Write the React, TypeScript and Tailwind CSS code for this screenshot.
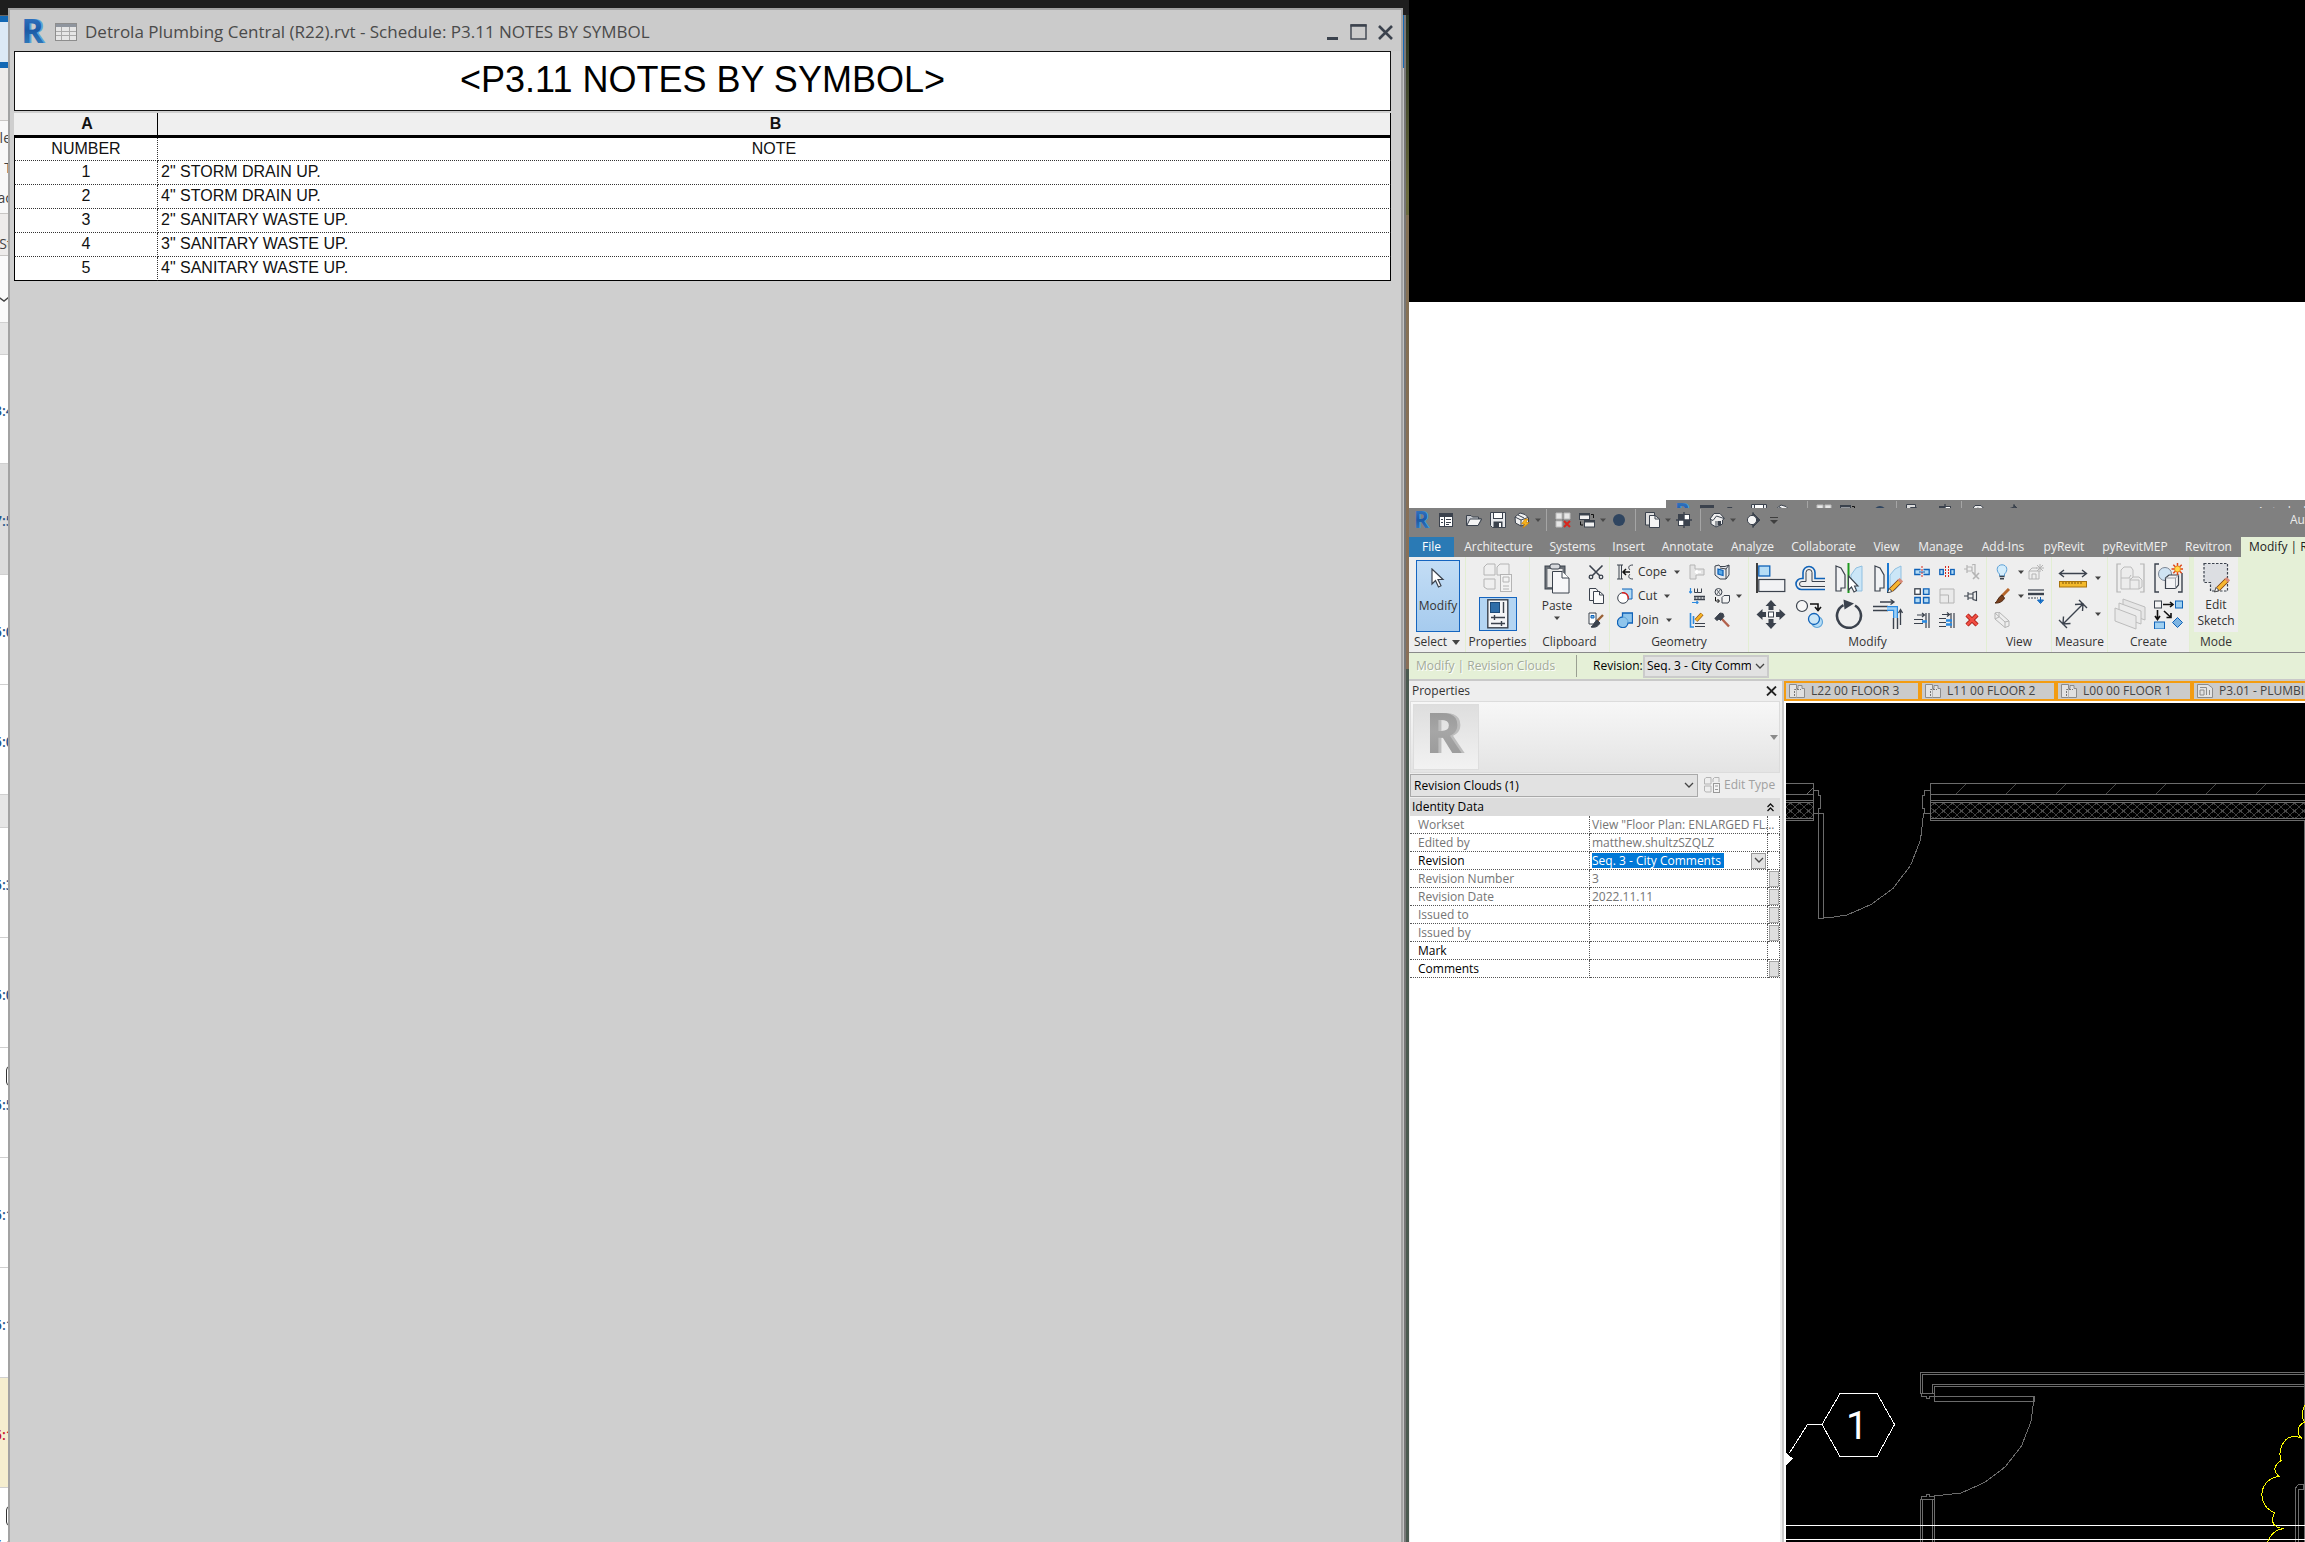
import React from 'react'
import clsx from 'clsx'

type Kids = { children?: React.ReactNode }

const INK = '#3b424d'
const BLUE = '#0f62b8'
const SKY = '#b5dcf5'
const PALE = '#e9ebef'
const OFF = '#b4b4b4'

function Svg({ w = 16, h = w, children }: Kids & { w?: number; h?: number }) {
  return (
    <svg
      width={w}
      height={h}
      viewBox={`0 0 ${w} ${h}`}
      fill="none"
      stroke={INK}
      aria-hidden="true"
      className="shrink-0"
    >
      {children}
    </svg>
  )
}

const Caret = ({ color = '#444' }: { color?: string }) => (
  <Svg w={6} h={4}>
    <path d="M0 0.5H6L3 4Z" fill={color} stroke="none" />
  </Svg>
)

const Chevron = () => (
  <Svg w={10} h={7}>
    <path d="M1 1L5 5L9 1" stroke="#444" strokeWidth="1.3" />
  </Svg>
)

function Logo({ w, h, gray }: { w: number; h: number; gray?: boolean }) {
  return (
    <svg width={w} height={h} viewBox="0 0 24 28" aria-hidden="true" className="overflow-visible">
      <defs>
        <linearGradient id={gray ? 'rg' : 'rb'} x1="0" y1="0" x2="0" y2="1">
          <stop offset="0" stopColor={gray ? '#8e8e8e' : '#3f83cf'} />
          <stop offset="0.5" stopColor={gray ? '#a6a6a6' : '#1b5aa6'} />
          <stop offset="1" stopColor={gray ? '#959595' : '#3c8fc4'} />
        </linearGradient>
      </defs>
      <g fontFamily="Open Sans, sans-serif" fontWeight="700" fontSize="37">
        <text x="0" y="27" fill={gray ? '#bdbdbd' : '#5aa3dc'}>
          R
        </text>
        <text x="-2" y="27" fill={gray ? 'url(#rg)' : 'url(#rb)'}>
          R
        </text>
      </g>
    </svg>
  )
}

/* ---------- schedule window ---------- */

const notes = [
  ['1', '2" STORM DRAIN UP.'],
  ['2', '4" STORM DRAIN UP.'],
  ['3', '2" SANITARY WASTE UP.'],
  ['4', '3" SANITARY WASTE UP.'],
  ['5', '4" SANITARY WASTE UP.']
]

function ScheduleWindow() {
  return (
    <section className="flex min-w-0 flex-1 flex-col border-t-2 border-r-2 border-l-2 border-[#a3a3a3] bg-[#cfcfcf]">
      <header className="flex h-[41px] items-center bg-[#cbcbcb] pt-[2px] pr-2 pl-[13px] text-[#4a4a4a]">
        <Logo w={22} h={27} />
        <span className="ml-[10px] flex">
          <Svg w={22} h={18}>
            <rect x="0.5" y="0.5" width="21" height="17" fill="#e6e6e6" stroke="#8d8d8d" />
            <rect x="1" y="1" width="20" height="3" fill="#8f959e" stroke="none" />
            <path d="M1 8.5H21M1 12.5H21M6.5 4V17M14.5 4V17" stroke="#a9a9a9" />
          </Svg>
        </span>
        <h1 className="ml-2 flex-1 truncate font-['Open_Sans',sans-serif] text-[17px]">
          Detrola Plumbing Central (R22).rvt - Schedule: P3.11 NOTES BY SYMBOL
        </h1>
        <div className="flex gap-[11px]">
          <button aria-label="Minimize">
            <Svg w={12} h={16}>
              <path d="M0 14.5H11" strokeWidth="3" />
            </Svg>
          </button>
          <button aria-label="Maximize">
            <Svg w={17} h={16}>
              <rect x="1" y="1" width="15" height="14" strokeWidth="1.4" />
              <path d="M0.5 1.5H16.5" strokeWidth="2.5" />
            </Svg>
          </button>
          <button aria-label="Close">
            <Svg w={15} h={16}>
              <path d="M1 2L14 15M14 2L1 15" strokeWidth="2.6" />
            </Svg>
          </button>
        </div>
      </header>

      <div className="mr-[10px] ml-1 font-['Liberation_Sans',Arial,sans-serif] text-[#111]">
        <h2 className="flex h-[60px] items-center justify-center border border-[#111] bg-white pb-[2px] text-[36px] text-black">
          &lt;P3.11 NOTES BY SYMBOL&gt;
        </h2>
        <table className="mt-[2px] w-full table-fixed border-separate border-spacing-0 bg-white text-[16px] leading-5">
          <colgroup>
            <col className="w-[144px]" />
            <col />
          </colgroup>
          <thead>
            <tr className="h-[25px] bg-[#efefef]">
              <th className="border-r border-b-3 border-black p-0 pl-[3px]">A</th>
              <th className="border-r border-b-3 border-black p-0 pl-[3px]">B</th>
            </tr>
          </thead>
          <tbody>
            <tr className="h-[23px]">
              <td className="border-r border-b border-l border-dotted border-[#333] border-l-black p-0 text-center [border-left-style:solid]">
                NUMBER
              </td>
              <td className="border-r border-b border-dotted border-[#333] border-r-black p-0 text-center [border-right-style:solid]">
                NOTE
              </td>
            </tr>
            {notes.map(([n, text], i) => (
              <tr key={n} className="h-6">
                <td
                  className={clsx(
                    'border-r border-b border-l border-dotted border-[#333] border-l-black p-0 pb-[2px] text-center [border-left-style:solid]',
                    i === notes.length - 1 && 'border-b-black [border-bottom-style:solid]'
                  )}
                >
                  {n}
                </td>
                <td
                  className={clsx(
                    'border-r border-b border-dotted border-[#333] border-r-black p-0 pb-[2px] pl-[3px] [border-right-style:solid]',
                    i === notes.length - 1 && 'border-b-black [border-bottom-style:solid]'
                  )}
                >
                  {text}
                </td>
              </tr>
            ))}
          </tbody>
        </table>
      </div>
    </section>
  )
}

/* ---------- sliver of the mail window behind ---------- */

const mailRows = [
  { t: '3:4', c: 'h-[109px] bg-white' },
  { t: '7:5', c: 'h-[111px] bg-[#dcdcdc]' },
  { t: '5:0', c: 'h-[110px] bg-white' },
  { t: '5:0', c: 'h-[110px] bg-white' },
  { t: '', c: 'h-[33px] bg-[#e6e6e6]' },
  { t: '5:3', c: 'h-[110px] bg-white' },
  { t: '5:0', c: 'h-[110px] bg-white' },
  { t: '5:5', c: 'h-[110px] bg-white', box: true },
  { t: '5:1', c: 'h-[110px] bg-white' },
  { t: '5:1', c: 'h-[110px] bg-white' },
  { t: '5:1', c: 'h-[110px] bg-[#f5eecf] text-[#c8102e]' },
  { t: '5:1', c: 'h-[110px] bg-white', box: true }
]

function MailSliver() {
  return (
    <aside className="flex w-2 shrink-0 flex-col overflow-hidden font-['Open_Sans',sans-serif] text-[14px] leading-5 text-[#444]">
      <div className="h-2 shrink-0 border-b border-[#666] bg-[#1e1e1e]" />
      <div className="h-[52px] shrink-0 border-y-[6px] border-[#1368b4] bg-[#dce9f5]" />
      <div className="h-[53px] shrink-0 border-b border-[#c8c6c4] bg-[#eeeceb]" />
      <div className="flex h-[92px] shrink-0 flex-col items-end justify-around overflow-hidden bg-[#f8f8f8] pt-[2px]">
        <span className="-mr-[3px]">le</span>
        <span className="-mr-1">T</span>
        <span className="-mr-1">ac</span>
      </div>
      <div className="flex h-[43px] shrink-0 items-end justify-end border-y border-[#c8c6c4] bg-[#eeeceb] pb-px">
        <span className="-mr-1">St</span>
      </div>
      <div className="flex h-[66px] shrink-0 items-center bg-[#fafafa] pt-5">
        <Svg w={8} h={8}>
          <path d="M-3 1L4 6L9 2" stroke="#444" strokeWidth="1.4" />
        </Svg>
      </div>
      <div className="h-[33px] shrink-0 border-y border-[#d0d0d0] bg-[#e6e6e6]" />
      {mailRows.map((r, i) => (
        <div
          key={i}
          className={clsx(
            'relative flex shrink-0 items-center overflow-hidden border-b border-[#d0d0d0] pt-1 font-semibold text-[#27548a]',
            r.c
          )}
        >
          {r.box && (
            <i className="absolute top-[18px] left-[6px] size-5 rounded-sm border border-[#333]" />
          )}
          <span className="-ml-[6px]">{r.t}</span>
        </div>
      ))}
    </aside>
  )
}

/* ---------- quick access bar ---------- */

const Cell = ({ label, children }: Kids & { label: string }) => (
  <button aria-label={label} className="flex w-6 items-center justify-center">
    {children}
  </button>
)
const Drop = () => (
  <span className="flex w-2 items-center justify-center">
    <Caret color="#4a4a4a" />
  </span>
)
const Sep = () => <span className="mx-1 h-[22px] w-px bg-[#a5a5a5]" />

function QuickAccess({ titleWidth }: { titleWidth: string }) {
  return (
    <div className="flex h-[29px] items-center overflow-hidden bg-[#808080] pb-[5px] pl-px">
      <Cell label="Revit">
        <Logo w={15} h={17} />
      </Cell>
      <Cell label="Home">
        <Svg>
          <rect x="1.5" y="1.5" width="13" height="13" fill="#fff" />
          <path d="M2 3.5H14" strokeWidth="3" />
          <path d="M6.5 4V14M3 7.5H5M3 10.5H5M8 7.5H13M8 10.5H13M8 12.5H11" />
        </Svg>
      </Cell>
      <span className="w-1" />
      <Cell label="Open">
        <Svg>
          <path d="M0.5 13.5V3.5H5L6.5 5H12.5V7H15.5L12 13.5Z" fill="#c9ccd1" />
          <path d="M0.8 13.5L4 7H15.6L12 13.5Z" fill="#f4f4f4" />
        </Svg>
      </Cell>
      <Cell label="Save">
        <Svg>
          <path d="M0.5 0.5H15.5V15.5H2.5L0.5 13.5Z" fill="#e7e9ec" />
          <rect x="3.5" y="0.5" width="9" height="6" fill="#fff" />
          <rect x="4" y="10" width="8" height="5.5" fill={INK} />
          <rect x="9" y="11" width="2" height="4" fill="#fff" stroke="none" />
        </Svg>
      </Cell>
      <Cell label="Synchronize">
        <Svg>
          <path d="M1 5L6 1L11 2.5L14.5 6V11L7 14L1.5 11Z" fill="#f1f1f1" />
          <path d="M1 5L7 8L14 5.5M7 8V14M4 3L10 6" />
          <path
            d="M11 7L7.5 12H10.5L9 16L15.5 10.5H12L14 7Z"
            fill="#f7b41c"
            stroke="#c77a00"
            strokeWidth="0.6"
          />
        </Svg>
      </Cell>
      <Drop />
      <Sep />
      <Cell label="Close inactive views">
        <Svg>
          <path d="M1 1H7V7H1ZM9 1H15V7H9ZM1 9H7V15H1Z" fill="#e7e7e7" stroke="#bbb" />
          <path d="M9 9L15 15M15 9L9 15" stroke="#d9261c" strokeWidth="2" />
        </Svg>
      </Cell>
      <Cell label="Switch windows">
        <Svg>
          <rect x="0.5" y="1.5" width="10" height="6" fill="#f1f1f1" />
          <rect x="5.5" y="8.5" width="10" height="6.5" fill="#f1f1f1" />
          <path d="M0.5 2.5H10.5M5.5 9.5H15.5" strokeWidth="2" />
          <path d="M12 2.5H14.5V6M1.5 9.5V13H4" stroke="#111" />
        </Svg>
      </Cell>
      <Drop />
      <Cell label="Record">
        <span className="size-3 rounded-full bg-[#2f4560]" />
      </Cell>
      <Sep />
      <Cell label="Paste">
        <Svg>
          <path d="M1.5 0.5H10.5V13H1.5Z" fill="#ddd" />
          <path d="M5.5 3.5H11L15.5 7V15.5H5.5Z" fill="#f4f4f4" />
          <path d="M11 3.5V7H15.5" />
        </Svg>
      </Cell>
      <Drop />
      <Cell label="Spot">
        <Svg>
          <rect x="2.5" y="2.5" width="11" height="11" fill="#fff" />
          <path d="M8 0V16M0 8H16" strokeWidth="1.4" />
          <path d="M3 3H8V8H3ZM8 8H13V13H8Z" fill={INK} stroke="none" />
        </Svg>
      </Cell>
      <Sep />
      <Cell label="Default 3D view">
        <Svg>
          <path d="M1 7L5 1.5H11L15.5 6.5L13.5 8V12L7 15L2 12V8Z" fill="#eee" />
          <path d="M1 7L4 8.5L7.5 4L15 6.5M7 9V14.5" />
          <rect x="9" y="9.5" width="2.5" height="3.5" fill={INK} />
        </Svg>
      </Cell>
      <Drop />
      <span className="w-1" />
      <Cell label="Section">
        <Svg>
          <path d="M8 1L15 8L8 15Z" fill={INK} />
          <circle cx="7" cy="8" r="4.6" fill="#f4f4f4" />
          <path d="M8 0V3M8 13V16" />
        </Svg>
      </Cell>
      <button aria-label="Customize" className="ml-1 flex w-[10px] flex-col items-center gap-[2px]">
        <span className="h-px w-2 bg-[#3f3f3f]" />
        <Svg w={8} h={4}>
          <path d="M0 0H8L4 4Z" fill="#3f3f3f" stroke="none" />
        </Svg>
      </button>
      <span className="flex-1" />
      <span
        className={clsx(
          'shrink-0 overflow-hidden text-[12px] leading-4 whitespace-nowrap text-[#ececec]',
          titleWidth
        )}
      >
        Autodesk
      </span>
    </div>
  )
}

const tabs = [
  { name: 'Architecture', w: 'w-[85px]' },
  { name: 'Systems', w: 'w-[63px]' },
  { name: 'Insert', w: 'w-[49px]' },
  { name: 'Annotate', w: 'w-[69px]' },
  { name: 'Analyze', w: 'w-[61px]' },
  { name: 'Collaborate', w: 'w-[81px]' },
  { name: 'View', w: 'w-[45px]' },
  { name: 'Manage', w: 'w-[63px]' },
  { name: 'Add-Ins', w: 'w-[62px]' },
  { name: 'pyRevit', w: 'w-[60px]' },
  { name: 'pyRevitMEP', w: 'w-[82px]' },
  { name: 'Revitron', w: 'w-[65px]' }
]

function RibbonTabs() {
  return (
    <nav className="flex h-5 overflow-hidden bg-[#808080] text-[12px] leading-5 whitespace-nowrap text-[#f0f0f0]">
      <button className="mr-[2px] w-[45px] shrink-0 bg-[#2a7ab5] text-white">File</button>
      {tabs.map((t) => (
        <button key={t.name} className={clsx('shrink-0', t.w)}>
          {t.name}
        </button>
      ))}
      <button className="flex-1 overflow-hidden bg-[#e5f0d7] pl-2 text-left text-[#222]">
        Modify | Revision Clouds
      </button>
    </nav>
  )
}

/* ---------- ribbon icons ---------- */

const geometryIcons = [
  <Svg>
    <path d="M0 1H6M0 15H6M2 1V15M4.5 1V15M16 1C11 1 11 4 13 6M16 15C11 15 11 12 13 10" />
    <path d="M13 8H6M9 5L6 8L9 11" stroke="#111" strokeWidth="1.5" />
  </Svg>,
  <Svg>
    <path d="M5 1H15V11H11" fill={SKY} stroke={BLUE} />
    <circle cx="6" cy="10" r="5.3" fill="#fff" stroke={INK} />
    <path d="M5 4.8A5.3 5.3 0 0 1 11.2 11" stroke="#e02020" strokeWidth="1.4" />
  </Svg>,
  <Svg>
    <path d="M5.5 1H15.5V11H11A5.3 5.3 0 1 1 5.5 5Z" fill="#8fc5ec" stroke={BLUE} strokeWidth="1.3" />
    <path d="M5.5 5A5.3 5.3 0 0 1 11 11" stroke="#5fa4d8" />
  </Svg>
]

const Cut = () => (
  <Svg>
    <path d="M1.5 1.5L12 12M14.5 1.5L4 12" strokeWidth="1.6" />
    <circle cx="3" cy="13" r="1.8" strokeWidth="1.3" />
    <circle cx="13" cy="13" r="1.8" strokeWidth="1.3" />
  </Svg>
)
const Copy = () => (
  <Svg>
    <path d="M1.5 0.5H8L10 3V12.5H1.5Z" fill="#f6f6f6" />
    <path d="M5.5 3.5H11.5L15.5 7V15.5H5.5Z" fill="#fafafa" />
    <path d="M11.5 3.5V7H15.5" />
  </Svg>
)
const Match = () => (
  <Svg>
    <path d="M1 1H8V12H1Z" fill="#fff" />
    <path d="M3 3.5H6V6H3Z" fill="#79b6e6" stroke={BLUE} />
    <path d="M15 3L9 9" stroke="#9a6136" strokeWidth="2.4" />
    <path d="M9 8L12 11C10 15 6 16 3 15C6 13 6 10 9 8Z" fill={INK} />
  </Svg>
)

const geometrySide = [
  <Svg>
    <path d="M1 1H6V5H15V11H7V15H1Z" fill="#e4e4e4" stroke={OFF} />
    <path d="M12 8H6.5M8.5 6L6.5 8L8.5 10" stroke="#fff" strokeWidth="1.5" />
  </Svg>,
  <Svg>
    <path d="M1 2L5 1L6 2.5H11L15 1V11L12 15H6L1 11Z" fill={PALE} />
    <path d="M12 15V5L15 1M12 5L6 4" />
    <path d="M4 5L9 6.5V11.5L4 10Z" fill="#5aa9e6" stroke={BLUE} strokeWidth="1.3" />
  </Svg>,
  <Svg>
    <path d="M5.5 0.5V4.5H8.5V0.5M8.5 4.5H12.5V0.5" />
    <path d="M5 8.5H16M5 11.5H16" strokeWidth="1.3" />
    <path d="M5 10H16" strokeDasharray="2 1" />
    <path d="M1.5 0V5M0 3.5L1.5 5L3 3.5M3 14.5H9M7.5 13L9 14.5L7.5 16" stroke="#2b8ae0" strokeWidth="1.2" />
  </Svg>,
  <Svg>
    <circle cx="4.5" cy="4" r="3.5" />
    <path d="M2.5 1.5L6.5 6.5M6.5 1.5L2.5 6.5" strokeWidth="0.8" />
    <path d="M8 9.5L10 7.5H15.5V13L14 15H8Z" fill="#f3f3f3" />
    <path d="M1.5 9V13H5M3.5 11L5.5 13L3.5 15" stroke="#111" />
  </Svg>,
  <Svg>
    <path d="M1.5 1V15H5M4.5 4V12" stroke="#2b8ae0" strokeWidth="1.6" />
    <path d="M13 2L7 8.5" stroke="#7a3b0c" strokeWidth="4" />
    <path d="M13 2L7 8.5" stroke="#f5b324" strokeWidth="2.6" />
    <path d="M6 11.5H16M6 14.5H16" strokeWidth="1.2" />
  </Svg>,
  <Svg>
    <path d="M7 6L15 14.5" stroke="#b2604b" strokeWidth="2.4" />
    <path d="M0.8 6.5L6 1L9 1.5L10 4.5L6.5 8.5L5 7L3 8.5Z" fill={INK} />
  </Svg>
]

const modifyBig = [
  <Svg w={30}>
    <path d="M1 0V30" stroke="#111" strokeWidth="1.6" />
    <rect x="2.8" y="3" width="11" height="10" fill={SKY} stroke={BLUE} strokeWidth="1.3" />
    <rect x="2.8" y="16.5" width="26" height="12" fill="#f1f2f4" strokeWidth="1.2" />
  </Svg>,
  <Svg w={30}>
    <path
      d="M30 26.5H6.5A5.5 5.5 0 0 1 6.5 15.5H8V9.5A6 6 0 0 1 20 9.5V15.5H30"
      stroke={BLUE}
      strokeWidth="1.6"
    />
    <path d="M30 23.5H7A2.5 2.5 0 0 1 7 18.5H11V9.5A3 3 0 0 1 17 9.5V18.5H30" strokeWidth="1" />
  </Svg>,
  <Svg w={30}>
    <path d="M2 3L7 5L11 12V25H7V28H2Z" fill="#f1f2f4" strokeWidth="1.2" />
    <path d="M28 3L22 5L17 12V25H22V28H28Z" fill="#cbe6f7" stroke="#8fbfe0" />
    <path d="M14.5 0V30" stroke="#1f9a1f" strokeWidth="2" />
    <path d="M14.5 13V27L17.5 24L20 29L22.5 27.5L20.5 23H24Z" fill="#fff" strokeWidth="1.1" />
  </Svg>,
  <Svg w={30}>
    <path d="M2 3L7 5L11 12V25H7V28H2Z" fill="#f1f2f4" strokeWidth="1.2" />
    <path d="M28 3L22 6L17 12V27H22L28 20Z" fill="#cbe6f7" stroke="#8fbfe0" />
    <path d="M15 0V30" stroke="#1b78d0" strokeWidth="2" />
    <path d="M27 18L18 27" stroke="#7a3b0c" strokeWidth="5.2" />
    <path d="M26.5 18.5L18 27" stroke="#f7b731" strokeWidth="3.6" />
    <path d="M25.6 16L29 19.4" stroke="#d98b7a" strokeWidth="3" />
    <path d="M14.5 30L16 25.5L19 28.5Z" fill="#fff" stroke="#222" strokeWidth="0.8" />
  </Svg>,
  <Svg w={30}>
    <path
      d="M15 1L20.5 7H17.5V11H12.5V7H9.5ZM15 30L20.5 24H17.5V20H12.5V24H9.5ZM0.5 15.5L6.5 10V13H10V18H6.5V21ZM29.5 15.5L23.5 10V13H20V18H23.5V21Z"
      fill={INK}
      stroke="none"
    />
    <rect x="12.5" y="13" width="5" height="5" fill="#fff" />
  </Svg>,
  <Svg w={30}>
    <circle cx="7" cy="7" r="5.5" fill="#f6f6f6" strokeWidth="1.2" />
    <path d="M15 5H23V10M20 8L23 11.5L26 8" stroke="#111" strokeWidth="1.6" />
    <circle cx="22" cy="23" r="5.5" fill={SKY} stroke="#5fa4d8" strokeWidth="1.2" />
    <circle cx="19" cy="20" r="5.5" fill="#cbe6f7" stroke={BLUE} strokeWidth="1.3" />
  </Svg>,
  <Svg w={30}>
    <path d="M21 6.5A12 12 0 1 1 9.5 6.2" strokeWidth="2.6" />
    <path d="M9.5 0.5L20 4.5L10.5 10.5Z" fill={INK} stroke="none" />
  </Svg>,
  <Svg w={30}>
    <path d="M0 7.5H15M0 11.5H15M20.5 19V30M24.5 19V30" strokeWidth="1.4" />
    <path d="M14 9.5H22.5V19" stroke="#2b8ae0" strokeWidth="5" />
    <path d="M14 9.5H22.5V19" stroke="#9ed0f5" strokeWidth="2.6" />
    <path d="M7 3H21M17.5 0.5L21 3L17.5 5.5M27.5 26V11M25.5 14L27.5 10.5L29.5 14" strokeWidth="1.3" />
  </Svg>
]

const modifySmall = [
  <Svg>
    <path d="M8 2V14" stroke="#d9261c" strokeDasharray="2 1" />
    <path d="M6.5 5.5H0.8V10.5H6.5M9.5 5.5H15.2V10.5H9.5" fill={SKY} stroke={BLUE} strokeWidth="1.3" />
    <path d="M5 8H11" stroke={BLUE} />
  </Svg>,
  <Svg>
    <path d="M6.5 2V14M9.5 2V14" stroke="#d9261c" strokeDasharray="2 1" />
    <rect x="0.8" y="5.5" width="3.5" height="5" fill={SKY} stroke={BLUE} strokeWidth="1.3" />
    <rect x="11.7" y="5.5" width="3.5" height="5" fill={SKY} stroke={BLUE} strokeWidth="1.3" />
  </Svg>,
  <Svg>
    <path d="M0 5H3M3 1V9M3 3H8V7H3M8 1L11 0V10L8 8" stroke={OFF} strokeWidth="1.2" />
    <path d="M9 9L15 15M15 9L9 15" stroke={OFF} strokeWidth="1.6" />
  </Svg>,
  <Svg>
    <rect x="0.8" y="0.8" width="5.5" height="5.5" fill="#fff" strokeWidth="1.3" />
    <path
      d="M9.5 0.8H15V6.3H9.5ZM0.8 9.5H6.3V15H0.8ZM9.5 9.5H15V15H9.5Z"
      fill={SKY}
      stroke={BLUE}
      strokeWidth="1.3"
    />
  </Svg>,
  <Svg>
    <path d="M1 1H15V15H1ZM1 7H9.5V15" fill="#eaeaea" stroke={OFF} />
  </Svg>,
  <Svg>
    <path d="M0 8H4M4 4V12M4 6H9V10H4M9 4.5L12.5 3.5V12.5L9 11.5Z" strokeWidth="1.1" />
  </Svg>,
  <Svg>
    <path d="M0 7.5H9M0 11.5H9M12 1V16M15 1V16M3 3H10M8 1L10.5 3L8 5" strokeWidth="1.2" />
    <path d="M8 9.5H13" stroke="#2b8ae0" strokeWidth="2.6" />
  </Svg>,
  <Svg>
    <path
      d="M0 6.5H7M0 10.5H7M0 14.5H7M12 1V16M15 1V16M3 2.5H10M8 0.5L10.5 2.5L8 4.5"
      strokeWidth="1.2"
    />
    <path d="M7 8.5H13M7 12.5H13" stroke="#2b8ae0" strokeWidth="2.6" />
  </Svg>,
  <Svg>
    <path d="M3 3L13 13M13 3L3 13" stroke="#a51d14" strokeWidth="4.4" />
    <path d="M3 3L13 13M13 3L3 13" stroke="#f04d43" strokeWidth="2.6" />
  </Svg>
]

const createIcons = [
  <Svg w={30}>
    <path d="M6 1H2V29H6M25 1H29V29H25" stroke={OFF} strokeWidth="1.2" />
    <path d="M6 7L9 4H16L18 7V14H24L27 17V24L24 26H6Z" fill="#ececec" stroke="#bcbcbc" />
    <path d="M6 15H14L16 12M15 15V26M18 14L15 17H24V26" stroke="#bcbcbc" />
  </Svg>,
  <Svg w={30}>
    <path d="M6 1H2V29H6M25 29H29V10" strokeWidth="1.4" />
    <circle cx="12" cy="11" r="6.5" fill="#cfe3f3" stroke="#7a8594" />
    <path d="M12.5 15L16 12H25.5V22L22.5 25.5H12.5Z" fill="#f3f3f5" strokeWidth="1.2" />
    <path d="M12.5 15H22.5V25.5M22.5 15L25.5 12" stroke="#9a9fa8" />
    <path
      d="M24.5 0V12M18.5 6H30.5M20.3 1.8L28.7 10.2M28.7 1.8L20.3 10.2"
      stroke="#e0471b"
      strokeWidth="1.5"
    />
    <circle cx="24.5" cy="6" r="3" fill="#ffd84a" stroke="#e88a1c" />
  </Svg>,
  <Svg w={32} h={32}>
    <path d="M9 1L31 9V22L9 14Z" fill="#e6e6e6" stroke="#bcbcbc" />
    <path d="M5 5L27 13V26L5 18Z" fill="#ececec" stroke="#bcbcbc" />
    <path d="M1 10L22 18V31L1 23Z" fill="#e9e9e9" stroke="#bcbcbc" />
  </Svg>,
  <Svg w={30}>
    <rect x="1.5" y="2" width="7" height="7" fill="#f4f4f4" />
    <rect x="22.5" y="2" width="7" height="7" fill="#9fd0f2" stroke={BLUE} />
    <path
      d="M10 5.5H20M17 3L20 5.5L17 8M4.5 11V20M2 17L4.5 20.5L7 17M11 12L18 18.5M18 14V18.5H13.5"
      stroke="#111"
      strokeWidth="1.6"
    />
    <rect x="1.5" y="23" width="10" height="7" fill="#9fd0f2" stroke={BLUE} />
    <path d="M24.5 18.5L29.5 23.5L24.5 28.5L19.5 23.5Z" fill="#7db4e2" stroke={BLUE} />
  </Svg>
]

/* ---------- ribbon ---------- */

type PanelProps = Kids & { title: React.ReactNode; className: string }

function Panel({ title, className, children }: PanelProps) {
  return (
    <section
      className={clsx(
        'flex shrink-0 flex-col border-r border-[#e2eed3] bg-[#eeeeee]',
        className
      )}
    >
      <div className="flex h-[75px] pt-[3px]">{children}</div>
      <h3 className="flex h-5 items-center justify-center gap-[5px] whitespace-nowrap">{title}</h3>
    </section>
  )
}

type GridProps = { icons: React.ReactNode[]; className?: string; cell: string }

function IconGrid({ icons, className, cell }: GridProps) {
  return (
    <div className={clsx('grid content-start', className)}>
      {icons.map((icon, i) => (
        <button key={i} className={clsx('flex items-center justify-center', cell)}>
          {icon}
        </button>
      ))}
    </div>
  )
}

function Ribbon() {
  return (
    <div className="flex h-24 overflow-hidden border-b border-[#8a8a8a] bg-[#e5f0d7] text-[12px] leading-4 text-[#333]">
      <Panel
        title={
          <>
            Select
            <Svg w={8} h={5}>
              <path d="M0 0H8L4 5Z" fill="#444" stroke="none" />
            </Svg>
          </>
        }
        className="w-[57px]"
      >
        <button className="ml-[7px] flex h-[72px] w-11 flex-col items-center border border-[#1565c0] bg-linear-to-b from-[#c3ddf5] to-[#a6cbee] pt-[7px]">
          <Svg w={14} h={20}>
            <path d="M1 1V16L4.5 12.5L7.5 19L10 17.8L7 11.5H12Z" fill="#fff" strokeWidth="1.2" />
          </Svg>
          <span className="mt-[10px]">Modify</span>
        </button>
      </Panel>

      <Panel title="Properties" className="w-16">
        <div className="flex w-full flex-col items-center">
          <button aria-label="Type properties" className="mt-[3px]">
            <Svg w={30}>
              <path
                d="M1 4L4 1H12V12H1ZM14 4L17 1H26V12H14ZM1 16H12V26H4L1 24Z"
                fill="#efefef"
                stroke={OFF}
              />
              <rect x="17.5" y="11.5" width="11" height="17" fill="#f3f3f3" stroke={OFF} />
              <path d="M20 14H26V19H20ZM20 23H26M20 26H26" stroke={OFF} />
            </Svg>
          </button>
          <button
            aria-label="Properties"
            className="mt-1 flex h-[34px] w-[38px] items-center justify-center border border-[#1565c0] bg-[#b4d5f2]"
          >
            <Svg w={22} h={30}>
              <rect x="0.8" y="0.8" width="20" height="28" fill="#f4f5f7" strokeWidth="1.4" />
              <rect x="3.5" y="3.5" width="9" height="10" fill="#2f6da8" stroke="#1c4a7a" />
              <path d="M16.5 3V14M4 18.5H18M7.5 16V21M4 24.5H18M14.5 22V27" strokeWidth="1.4" />
            </Svg>
          </button>
        </div>
      </Panel>

      <Panel title="Clipboard" className="w-20">
        <button className="flex w-[54px] flex-col items-center pt-[3px]">
          <Svg w={26} h={31}>
            <rect x="1" y="3" width="20" height="23" fill="#6c7178" />
            <rect x="3.5" y="6" width="15" height="18" fill="#e9e9e9" stroke="none" />
            <rect x="6" y="1" width="10" height="5" rx="2" fill="#d8dade" />
            <path d="M8.5 8.5H18L25 15V30H8.5Z" fill="#f7f7f9" />
            <path d="M18 8.5V15H25" fill="#fff" />
          </Svg>
          <span className="mt-1">Paste</span>
          <span className="mt-[2px]">
            <Caret />
          </span>
        </button>
        <IconGrid icons={[<Cut />, <Copy />, <Match />]} cell="h-6 w-6" />
      </Panel>

      <Panel title="Geometry" className="w-[139px]">
        <div className="w-[74px] pl-[7px]">
          {['Cope', 'Cut', 'Join'].map((name, i) => (
            <button key={name} className="flex h-6 items-center gap-[5px]">
              {geometryIcons[i]}
              {name}
              <span className="ml-[2px]">
                <Caret />
              </span>
            </button>
          ))}
        </div>
        <IconGrid icons={geometrySide} className="grid-cols-2" cell="h-6 w-[25px]" />
        <span className="flex h-[72px] items-center pl-[2px]">
          <Caret />
        </span>
      </Panel>

      <Panel title="Modify" className="w-[238px]">
        <IconGrid icons={modifyBig} className="grid-cols-4 pl-[2px]" cell="h-9 w-[39px]" />
        <IconGrid icons={modifySmall} className="grid-cols-3 pl-[2px]" cell="h-6 w-[25px]" />
      </Panel>

      <Panel title="View" className="w-[65px]">
        <div className="flex flex-col">
          <button aria-label="Hide" className="flex h-6 w-9 items-center gap-2 pl-[7px]">
            <Svg>
              <path
                d="M5.5 10C1.5 6.5 3 0.8 8 0.8S14.5 6.5 10.5 10V12H5.5Z"
                fill="#d3ecfb"
                stroke="#5b9fd6"
              />
              <path d="M5.5 12.5H10.5M6 14.8H10" strokeWidth="1.5" />
            </Svg>
            <Caret />
          </button>
          <button aria-label="Override" className="flex h-6 w-9 items-center gap-2 pl-[7px]">
            <Svg>
              <path d="M15 1L8 8" stroke="#b5652a" strokeWidth="3" />
              <path d="M8 7L10.5 10C9 14 4 15.5 1 15C4 13 4 9 8 7Z" fill="#7a3f1c" stroke="#4c2a15" />
            </Svg>
            <Caret />
          </button>
          <button aria-label="Selection box" className="flex h-6 w-9 items-center pl-[7px]">
            <Svg>
              <path d="M1 1L5 0L15 9V14L11 15.5L1 7ZM1 1L11 10L15 9M11 10V15.5M5 0V5L1 7" stroke={OFF} />
            </Svg>
          </button>
        </div>
        <div className="flex flex-col pl-[5px]">
          <button aria-label="Displace" className="flex h-6 items-center">
            <Svg>
              <path d="M1 7H11V15H1ZM1 7L4 4H9M4 15V10H8V15" stroke={OFF} />
              <path d="M12 0V8M8 4H16M9 1L15 7M15 1L9 7" stroke={OFF} />
            </Svg>
          </button>
          <button aria-label="Linework" className="flex h-6 items-center">
            <Svg>
              <path d="M0 2H16" strokeWidth="1.2" />
              <path d="M0 6H16" strokeWidth="2.4" />
              <path d="M0 10H10" strokeDasharray="2 1" />
              <path d="M12.5 9V14M9.5 12L12.5 15.5L15.5 12Z" fill="#2b8ae0" stroke={BLUE} />
            </Svg>
          </button>
        </div>
      </Panel>

      <Panel title="Measure" className="w-14">
        <div className="flex flex-col pl-[6px]">
          <button aria-label="Measure" className="flex h-9 items-center gap-[7px]">
            <Svg w={30} h={24}>
              <path d="M2 7.5H28M6 4L1.5 7.5L6 11M24 4L28.5 7.5L24 11" strokeWidth="1.4" />
              <rect x="1.5" y="15.5" width="27" height="5.5" fill="#f3b92c" stroke="#a8730c" />
              <path
                d="M5 16V18M8 16V18M11 16V18M14 16V18M17 16V18M20 16V18M23 16V18"
                stroke="#7a5208"
              />
            </Svg>
            <Caret />
          </button>
          <button aria-label="Dimension" className="flex h-9 items-center gap-[7px]">
            <Svg w={30}>
              <path
                d="M5 25L25 5M1 21L9 29M21 1L29 9M17 5.5L25 5L24.5 12M12.5 24.5L5 25L5.5 17.5"
                strokeWidth="1.4"
              />
            </Svg>
            <Caret />
          </button>
        </div>
      </Panel>

      <Panel title="Create" className="w-[82px]">
        <IconGrid icons={createIcons} className="grid-cols-2 pl-[3px]" cell="h-9 w-[38px]" />
      </Panel>

      <section className="ml-1 flex w-11 shrink-0 flex-col items-center">
        <button className="flex h-[75px] w-full flex-col items-center bg-[#eeeeee] pt-[5px]">
          <Svg w={28} h={31}>
            <path d="M2 1.5H25.5V18L15 29H8.5V20.5H2Z" fill="#dcdee2" stroke="none" />
            <path d="M2 1.5H25.5V29H8.5V20.5H2Z" strokeDasharray="2.5 1.5" strokeWidth="1.2" />
            <path d="M25 18L16 27" stroke="#7a3b0c" strokeWidth="5.2" />
            <path d="M24.5 18.5L16 27" stroke="#f7b731" strokeWidth="3.6" />
            <path d="M23.6 16L27 19.4" stroke="#d98b7a" strokeWidth="3" />
            <path d="M12.5 30L14 25.5L17 28.5Z" fill="#fff" stroke="#222" strokeWidth="0.8" />
          </Svg>
          <span className="mt-1">Edit</span>
          Sketch
        </button>
        <h3 className="flex h-5 items-center">Mode</h3>
      </section>
    </div>
  )
}

function OptionsBar() {
  return (
    <div className="flex h-7 items-center overflow-hidden border-b-2 border-[#c9c9c9] bg-[#e5f0d7] text-[12px] whitespace-nowrap">
      <span className="w-[167px] shrink-0 pl-[7px] text-[#a3aa9b] [text-shadow:1px_1px_0_#fff]">
        Modify | Revision Clouds
      </span>
      <span className="h-[22px] w-px bg-[#9aa092]" />
      <label htmlFor="revision" className="w-[66px] pl-4 text-black">
        Revision:
      </label>
      <div className="relative w-[126px]">
        <select
          id="revision"
          className="block h-[23px] w-full appearance-none border-2 border-[#cbcbcb] bg-[#e2e2e2] pr-4 pl-[2px] text-black"
        >
          <option>Seq. 3 - City Comments</option>
        </select>
        <span className="pointer-events-none absolute top-2 right-1">
          <Chevron />
        </span>
      </div>
    </div>
  )
}

/* ---------- properties palette ---------- */

const props = [
  { name: 'Workset', value: 'View "Floor Plan: ENLARGED FL...' },
  { name: 'Edited by', value: 'matthew.shultzSZQLZ' },
  { name: 'Revision', value: 'Seq. 3 - City Comments', combo: true, on: true },
  { name: 'Revision Number', value: '3', btn: true },
  { name: 'Revision Date', value: '2022.11.11', btn: true },
  { name: 'Issued to', value: '', btn: true },
  { name: 'Issued by', value: '', btn: true },
  { name: 'Mark', value: '', on: true },
  { name: 'Comments', value: '', btn: true, on: true }
]

function PropertiesPalette() {
  return (
    <aside className="flex w-[375px] shrink-0 flex-col border-r-2 border-[#c9c9c9] bg-[#eeeeee] pr-[2px] pl-px text-[12px] whitespace-nowrap">
      <header className="flex h-5 shrink-0 items-center justify-between pr-[3px] pl-[2px] text-[#333]">
        Properties
        <button aria-label="Close palette">
          <Svg w={11} h={10}>
            <path d="M1 0.5L10 9.5M10 0.5L1 9.5" stroke="#222" strokeWidth="1.8" />
          </Svg>
        </button>
      </header>
      <div className="flex h-[72px] shrink-0 items-center justify-between border border-[#dcdcdc] bg-linear-to-b from-[#f7f7f7] to-[#e4e4e4] pr-px pl-[2px]">
        <div className="flex h-[66px] w-[66px] items-center justify-center border border-[#dddddd] bg-linear-to-b from-[#dedede] to-[#f2f2f2] pb-2">
          <Logo w={36} h={44} gray />
        </div>
        <button aria-label="Change type">
          <Svg w={8} h={5}>
            <path d="M0 0H8L4 5Z" fill="#8a8a8a" stroke="none" />
          </Svg>
        </button>
      </div>
      <div className="flex h-[25px] shrink-0 items-center">
        <div className="relative w-[288px]">
          <select
            aria-label="Filter"
            className="block h-[23px] w-full appearance-none border border-[#a9a9a9] bg-[#e2e2e2] pl-[3px] text-black"
          >
            <option>Revision Clouds (1)</option>
          </select>
          <span className="pointer-events-none absolute top-2 right-1">
            <Chevron />
          </span>
        </div>
        <button disabled className="ml-[6px] flex items-center gap-1 pb-[2px] text-[#a0a0a0]">
          <Svg>
            <path d="M0.5 2L2 0.5H7V7H0.5ZM9 5V2L10.5 0.5H15V5M0.5 9H7V15H2L0.5 14Z" stroke={OFF} />
            <rect x="9.5" y="6.5" width="6" height="9" fill="#f3f3f3" stroke="#999" />
            <path d="M11 9H14M11 12.5H14" stroke="#999" />
          </Svg>
          Edit Type
        </button>
      </div>
      <div className="flex h-[18px] shrink-0 items-center justify-between bg-[#dcdcdc] pr-[6px] pl-[2px] text-black">
        Identity Data
        <Svg w={7} h={9}>
          <path d="M0.5 4L3.5 1L6.5 4M0.5 8L3.5 5L6.5 8" stroke="#111" strokeWidth="1.3" />
        </Svg>
      </div>
      <div className="flex-1 bg-white">
        <table className="w-full table-fixed border-separate border-spacing-0 leading-[15px]">
          <colgroup>
            <col />
            <col className="w-[178px]" />
            <col className="w-3" />
          </colgroup>
          <tbody>
            {props.map((p) => (
              <tr key={p.name} className={clsx('h-[18px]', p.on ? 'text-black' : 'text-[#757575]')}>
                <th className="border-r border-b border-dotted border-[#555] p-0 pl-2 text-left font-normal">
                  {p.name}
                </th>
                <td className="border-r border-b border-dotted border-[#555] p-0 pl-[2px]">
                  {p.combo ? (
                    <div className="flex h-[16px] items-center justify-between pr-px">
                      <input
                        aria-label={p.name}
                        defaultValue={p.value}
                        className="h-[15px] w-[132px] bg-[#0078d7] text-white"
                      />
                      <button
                        aria-label="Choose revision"
                        className="flex h-4 w-[15px] items-center justify-center border border-[#999] bg-[#e3e3e3]"
                      >
                        <Chevron />
                      </button>
                    </div>
                  ) : (
                    p.value
                  )}
                </td>
                <td className="border-r border-b border-dotted border-[#555] p-0">
                  {p.btn && (
                    <button
                      aria-label={`Associate ${p.name}`}
                      className="ml-px block h-4 w-[10px] border border-[#a5a5a5] bg-[#dedede]"
                    />
                  )}
                </td>
              </tr>
            ))}
          </tbody>
        </table>
      </div>
    </aside>
  )
}

/* ---------- drawing area ---------- */

function DrawingArea() {
  return (
    <svg
      width="100%"
      height="100%"
      fill="none"
      stroke="#6b6b6b"
      shapeRendering="crispEdges"
      className="block bg-black"
    >
      <defs>
        <pattern id="hatch" width="9" height="8" patternUnits="userSpaceOnUse">
          <path d="M0 0L9 8M9 0L0 8" stroke="#3e3e3e" />
          <circle cx="4.5" cy="4" r="1.2" fill="#4a4a4a" stroke="none" />
        </pattern>
      </defs>
      {/* upper wall */}
      <rect x="0" y="99" width="27" height="16" fill="url(#hatch)" stroke="none" />
      <rect x="145" y="99" width="900" height="16" fill="url(#hatch)" stroke="none" />
      <path d="M0 80.5H27.5V117.5H0M0 91.5H27M0 97.5H27M0 99.5H27M0 115.5H27M21 91L27 85" />
      <path d="M1100 80.5H144.5V117.5H1100M145 91.5H1100M145 97.5H1100M145 99.5H1100M145 115.5H1100" />
      {[170, 220, 270, 320, 370, 420, 470, 520, 570].map((x) => (
        <path key={x} d={`M${x} 91L${x + 10} 81`} stroke="#444" />
      ))}
      {/* upper door */}
      <path d="M27 87.5H32.5V92.5H34.5V105.5H32.5V110.5M27 110.5H37.5V215.5H32.5V110.5" />
      <path d="M144 87.5H138.5V92.5H136.5V105.5H138.5V110.5H144" />
      <path d="M37.5 215L44.5 214.5L61 212L85 201.5L107 185.5L124.5 162.5L134.5 137L137.5 110.5" />
      <path d="M518.5 117V900" />
      {/* lower wall and door */}
      <path d="M1100 669.5H134.5V690.5H148.5V683.5H1100M1100 671.5H136.5V690M1100 681.5H146.5V690" />
      <path d="M135.5 690V693.5H140.5V695.5H143.5V693.5H248.5V698.5H148.5V690M247.5 694V698" />
      <path d="M247.5 699L245 718.5L235.5 743L219 764L198.5 779.5L175 790L148.5 793" />
      <path d="M135.5 796V793.5H140.5V791.5H143.5V793.5H148.5V796.5H134.5V1100M136.5 797V1100M146.5 797V1100M148.5 797V1100" />
      <path d="M519 781L512 782L509.5 785V1100M519 786H512.5V1100M517.5 781V786" />
      {/* pipes */}
      <path d="M0 822.5H1100M0 836.5H1100" stroke="#fff" />
      {/* keynote tag */}
      <path d="M36 721.5L54 690.5H91L108.5 721.5L91 753.5H54ZM36 721.5H21.5L3.5 750" stroke="#fff" />
      <path d="M0 750L7 755.5L0 763Z" fill="#fff" stroke="none" />
      <text
        x="71"
        y="736"
        textAnchor="middle"
        fill="#fff"
        stroke="none"
        fontSize="39"
        fontFamily="Roboto, sans-serif"
      >
        1
      </text>
      {/* revision cloud */}
      <path
        d="M519 702Q514 711 518.5 719.5A9 9 0 0 0 516 735.5Q509 732 502 735A20 20 0 0 0 495 757.5Q484 765 493 773.5A18.5 18.5 0 0 0 488.5 809.5Q482 824 497.5 825.5Q486 827 481.5 839"
        stroke="#ffff00"
      />
    </svg>
  )
}

const viewTabs = ['L22 00 FLOOR 3', 'L11 00 FLOOR 2', 'L00 00 FLOOR 1', 'P3.01 - PLUMBING']

function Views() {
  return (
    <main className="flex min-w-0 flex-1 flex-col overflow-hidden">
      <nav className="flex h-5 shrink-0 text-[12px] whitespace-nowrap text-[#444]">
        {viewTabs.map((t, i) => (
          <button
            key={t}
            className="flex w-[136px] shrink-0 items-center gap-[6px] border-2 border-[#f39c12] bg-[#cbcbcb] pl-[3px]"
          >
            {i < 3 ? (
              <Svg w={16} h={14}>
                <path d="M0.5 0.5H7.5V13.5H0.5Z" fill="#e3e3e3" stroke="#8c8c8c" />
                <path d="M7.5 4.5H9V1.5H13V4.5H15.5V13.5H7.5" fill="#e0e0e0" stroke="#8c8c8c" />
                <path d="M5.5 12V5.5H12" stroke="#777" strokeDasharray="2 1" />
              </Svg>
            ) : (
              <Svg w={16} h={14}>
                <path d="M0.5 0.5H11L15.5 4V13.5H0.5Z" fill="#e3e3e3" stroke="#8c8c8c" />
                <path d="M3 11V6H7V11ZM3 3.5H9.5V11M12.5 6V11" stroke="#8c8c8c" />
              </Svg>
            )}
            {t}
          </button>
        ))}
      </nav>
      <div className="min-h-0 flex-1 border-t-2 border-l-2 border-white">
        <DrawingArea />
      </div>
    </main>
  )
}

export default function App() {
  return (
    <div className="grid h-screen grid-cols-[1409fr_896fr] overflow-hidden bg-black font-['Open_Sans','Noto_Sans',sans-serif]">
      <div className="flex min-h-0 min-w-0 flex-col overflow-hidden">
        <div className="h-2 shrink-0 bg-[#1e1e1e]" />
        <div className="flex min-h-0 flex-1">
          <MailSliver />
          <ScheduleWindow />
          <div className="flex w-[6px] shrink-0 flex-col">
            <div className="h-[7px] bg-[#1e1e1e]" />
            <div className="flex flex-1">
              <div className="w-px bg-linear-to-b from-[#1368b4] from-[53px] to-[#c4c4c4] to-[53px]" />
              <div className="w-[2px] bg-[#777777]" />
              <div className="w-[3px] bg-linear-to-b from-[#25301f] via-[#6d6d3f] via-[180px] to-[#4b5a50] to-[654px]">
                <div className="mt-[200px] h-[454px] bg-linear-to-b from-[#857256] to-[#8a7058]" />
              </div>
            </div>
          </div>
        </div>
      </div>

      <div className="flex min-h-0 min-w-0 flex-col overflow-hidden">
        <div className="h-[302px] shrink-0 bg-black" />
        <div className="h-[198px] shrink-0 bg-white" />
        <div className="h-2 shrink-0 overflow-hidden bg-white pl-[257px]">
          <div className="bg-[#808080] pl-1">
            <QuickAccess titleWidth="w-12" />
          </div>
        </div>
        <QuickAccess titleWidth="w-[15px]" />
        <RibbonTabs />
        <Ribbon />
        <OptionsBar />
        <div className="flex min-h-0 flex-1 bg-[#eeeeee]">
          <PropertiesPalette />
          <Views />
        </div>
      </div>
    </div>
  )
}
